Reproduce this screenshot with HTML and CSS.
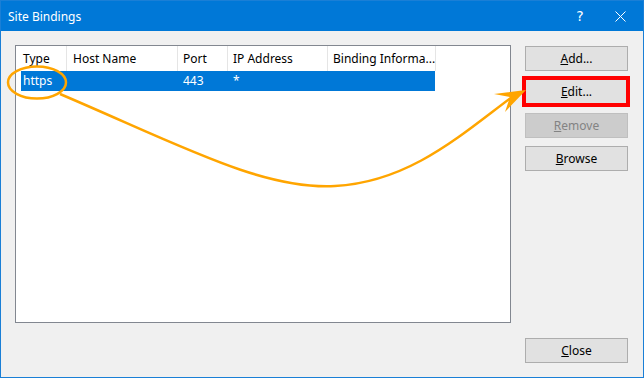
FILE: index.html
```html
<!DOCTYPE html>
<html>
<head>
<meta charset="utf-8">
<link rel="stylesheet" href="styles.css">
</head>
<body>
<div class="window">
  <div class="titlebar">
    <span class="title">Site Bindings</span>
    <span class="help">?</span>
    <span class="close-x">
      <svg width="11" height="11" viewBox="0 0 11 11"><path d="M0.5 0.5 L10.5 10.5 M10.5 0.5 L0.5 10.5" stroke="#fff" stroke-width="1" fill="none"/></svg>
    </span>
  </div>
  <div class="content">
    <div class="listbox">
      <div class="header">
        <div class="hcell c-type">Type</div>
        <div class="hcell c-host">Host Name</div>
        <div class="hcell c-port">Port</div>
        <div class="hcell c-ip">IP Address</div>
        <div class="hcell c-bind">Binding Informa...</div>
      </div>
      <div class="row selected">
        <div class="cell r-type">https</div>
        <div class="cell c-host"></div>
        <div class="cell c-port">443</div>
        <div class="cell c-ip">*</div>
        <div class="cell c-bind"></div>
      </div>
    </div>
    <div class="buttons">
      <button class="btn"><u>A</u>dd...</button>
      <button class="btn"><u>E</u>dit...</button>
      <button class="btn disabled"><u>R</u>emove</button>
      <button class="btn"><u>B</u>rowse</button>
      <button class="btn close"><u>C</u>lose</button>
    </div>
  </div>
  <div class="highlight"></div>
  <svg class="annot" width="644" height="378" viewBox="0 0 644 378">
    <ellipse cx="37" cy="82.5" rx="29" ry="16" fill="none" stroke="#ffa500" stroke-width="2.5"/>
    <path d="M60 94 C 180 145 262 190 335 186 C 410 182 462 134 512 97" fill="none" stroke="#ffa500" stroke-width="2.5"/>
    <polygon points="526,90 494,94 510,97 505,112" fill="#ffa500"/>
  </svg>
</div>
</body>
</html>
```
FILE: styles.css
```css
* { box-sizing: border-box; }
html, body { margin: 0; padding: 0; }
body {
  font-family: "Noto Sans", "Open Sans", sans-serif;
  font-size: 12px;
  background: #f0f0f0;
}
.window {
  position: relative;
  width: 644px;
  height: 378px;
  border: 1px solid #1a7fd6;
  background: #f0f0f0;
  display: flex;
  flex-direction: column;
}
.titlebar {
  height: 30px;
  background: #0078d7;
  color: #fff;
  display: flex;
  align-items: center;
  padding-left: 7px;
  flex-shrink: 0;
}
.title { font-size: 12px; flex: 1; }
.help { width: 20px; margin-right: 25px; text-align: center; font-size: 14px; font-family: "DejaVu Sans", sans-serif; font-weight: normal; }
.close-x { width: 11px; height: 11px; margin-right: 17px; display: flex; }
.content {
  flex: 1;
  display: flex;
  padding: 14px 15px 0 14px;
  gap: 14px;
}
.listbox {
  width: 496px;
  height: 278px;
  background: #fff;
  border: 1px solid #828790;
}
.header {
  display: flex;
  height: 25px;
}
.hcell {
  height: 25px;
  line-height: 25px;
  padding-left: 6px;
  border-right: 1px solid #e5e5e5;
  white-space: nowrap;
  overflow: hidden;
  color: #000;
}
.c-type { width: 51px; padding-left: 7px; }
.c-host { width: 111px; }
.c-port { width: 50px; padding-left: 5px; }
.c-ip { width: 100px; padding-left: 5px; }
.c-bind { width: 108px; padding-left: 5px; }
.row {
  display: flex;
  height: 20px;
  margin-left: 5px;
  width: 414px;
}
.row.selected { background: #0078d7; color: #fff; }
.cell {
  height: 20px;
  line-height: 19px;
  white-space: nowrap;
  padding-left: 5px;
}
.row .c-host { padding-left: 6px; }
.r-type { width: 46px; padding-left: 2px; }
.row .c-bind { width: 107px; }
.buttons {
  width: 103px;
  height: 317px;
  margin-top: 1px;
  display: flex;
  flex-direction: column;
  gap: 8px;
}
.btn {
  height: 25px;
  width: 103px;
  background: #e1e1e1;
  border: 1px solid #adadad;
  font-family: "Noto Sans", "Open Sans", sans-serif;
  font-size: 12px;
  color: #000;
  padding: 0;
  margin: 0;
}
.btn.disabled {
  background: #cccccc;
  border-color: #bfbfbf;
  color: #838383;
  margin-top: 1px;
}
.btn.close { margin-top: auto; }
.highlight {
  position: absolute;
  left: 521px;
  top: 75px;
  width: 108px;
  height: 31px;
  border: 4px solid #ff0000;
}
.annot {
  position: absolute;
  left: -1px;
  top: -1px;
  pointer-events: none;
}
```
